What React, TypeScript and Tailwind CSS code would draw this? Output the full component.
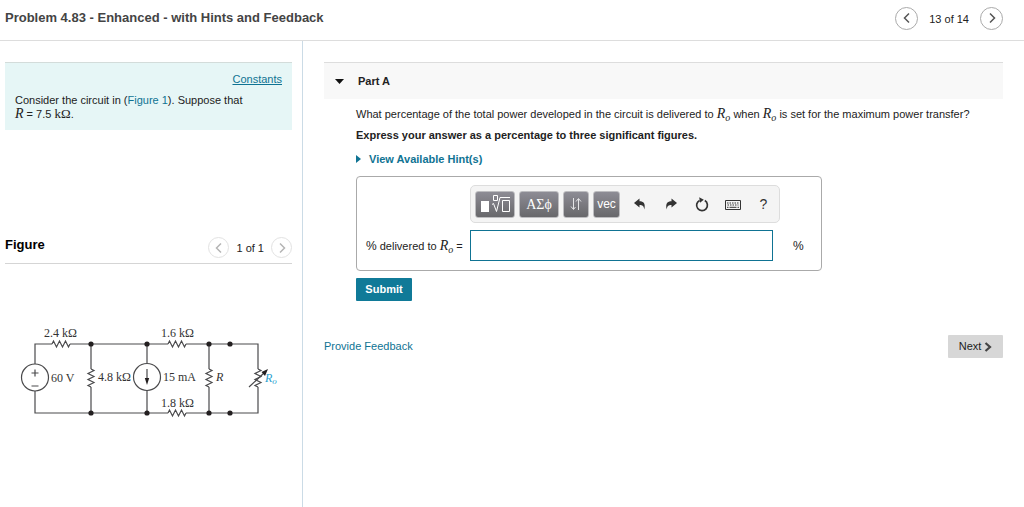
import { useState } from "react";
import type { ReactNode } from "react";

const LINK = "text-[#0f7393] hover:underline";

const TOOL_BUTTON =
  "flex h-[27px] shrink-0 items-center justify-center rounded-[3px] border border-[#bdbdc0] bg-linear-to-b from-[#8d8c95] to-[#68686b] text-white";

const ICON_BUTTON = "flex h-[27px] w-[31px] items-center justify-center text-[#333]";

function MathVar({ name, sub }: { name: string; sub?: string }) {
  return (
    <span className="font-['Liberation_Serif',serif] text-[14px] leading-none italic">
      {name}
      {sub && <sub className="bottom-[-3px] text-[10px]">{sub}</sub>}
    </span>
  );
}

function Chevron({ flip }: { flip?: boolean }) {
  return (
    <svg viewBox="0 0 10 12" className="h-3 w-[10px]" fill="none" stroke="currentColor" strokeWidth="1.5">
      <path d={flip ? "M3 1.5 7.5 6 3 10.5" : "M7 1.5 2.5 6 7 10.5"} />
    </svg>
  );
}

function Pager({ label, disabled }: { label: string; disabled?: boolean }) {
  const size = disabled ? "size-[21px] border-[#e2e2e2] text-[#b5b5b5]" : "size-[23px] border-[#aaa] text-[#555]";
  const button = `flex items-center justify-center rounded-full border ${size}`;
  return (
    <div className={`flex items-center text-[11px] text-[#222] ${disabled ? "gap-[7px]" : "gap-[11px]"}`}>
      <button type="button" aria-label="Previous" disabled={disabled} className={button}>
        <Chevron />
      </button>
      <span className="pt-[2px] whitespace-nowrap">{label}</span>
      <button type="button" aria-label="Next" disabled={disabled} className={button}>
        <Chevron flip />
      </button>
    </div>
  );
}

const NODES = [
  [91, 24], [147, 24], [209, 24], [230, 24],
  [91, 93], [147, 93], [209, 93], [230, 93],
];

// Zigzag resistors: horizontal ones start at x, vertical ones at y
const hResistor = (x: number, y: number) =>
  `M${x} ${y}l1.5-3 3 6 3-6 3 6 3-6 3 6 1.5-3`;
const vResistor = (x: number, y: number) =>
  `M${x} ${y}l3 1.5-6 3 6 3-6 3 6 3-6 3 3 1.5`;

function Circuit() {
  return (
    <svg viewBox="0 0 292 110" className="block h-[110px] w-[292px]" role="img" aria-label="Figure 1 circuit">
      <g fill="none" stroke="#4a4a4c" strokeWidth="1.2">
        <path d="M35 44V24H52M70 24H168M186 24H258V49M258 67V93H186M168 93H35V71" />
        <path d="M91 24V49M91 67V93M147 24V43M147 70V93M209 24V49M209 67V93" />
        <path d={hResistor(52, 24)} />
        <path d={hResistor(168, 24)} />
        <path d={hResistor(168, 93)} />
        <path d={vResistor(91, 49)} />
        <path d={vResistor(209, 49)} />
        <path d={vResistor(258, 49)} />
        <circle cx="35" cy="57.5" r="13.5" />
        <circle cx="147" cy="57" r="13.5" />
        <path d="M31.500 53h7M35 49.500v7M31.500 66h7M147 49V60M249 67 264 53" />
      </g>
      <g fill="#231f20">
        {NODES.map(([x, y]) => (
          <circle key={`${x}-${y}`} cx={x} cy={y} r="2.6" />
        ))}
        <path d="M144.800 58h4.400L147 65zM268 49l-3 7-3.500-4z" />
      </g>
      <g fill="#333" className="font-['Liberation_Serif',serif] text-[12px]">
        <text x="44" y="17">2.4 kΩ</text>
        <text x="161" y="17">1.6 kΩ</text>
        <text x="51" y="62">60 V</text>
        <text x="98" y="61">4.8 kΩ</text>
        <text x="163" y="61">15 mA</text>
        <text x="216" y="61" fontStyle="italic">R</text>
        <text x="161" y="87">1.8 kΩ</text>
        <text x="265" y="62" fontStyle="italic" fill="#2a9fd0">
          R<tspan dy="2" fontSize="9">o</tspan>
        </text>
      </g>
    </svg>
  );
}

function IconButton({ label, children }: { label: string; children: ReactNode }) {
  return (
    <button type="button" aria-label={label} className={ICON_BUTTON}>
      {children}
    </button>
  );
}

function Toolbar() {
  return (
    <div className="flex h-[38px] w-[310px] items-center gap-1 rounded-[5px] border border-[#ddd] bg-[#f4f4f4] pl-1">
      <button type="button" aria-label="Templates" className={`${TOOL_BUTTON} w-10`}>
        <svg viewBox="0 0 32 20" className="h-5 w-8" fill="none" stroke="white">
          <path d="M2 7h8v11H2z" fill="white" stroke="none" />
          <path d="M14.500 1.500h4v5h-4zM13 10.500l1.500-1 3 8L21 3.500h10M23.500 6.500h7v11h-7z" />
        </svg>
      </button>
      <button
        type="button"
        className={`${TOOL_BUTTON} w-10 font-['Liberation_Serif',serif] text-[14px]`}
      >
        ΑΣϕ
      </button>
      <button type="button" aria-label="Subscripts" className={`${TOOL_BUTTON} w-[26px]`}>
        <svg viewBox="0 0 12 14" className="h-[14px] w-3" fill="none" stroke="#e4e4e6">
          <path d="M3.500 1v11M1 9.500l2.500 3 2-2.500M8.500 13V2M6 4.500l2.500-3 2.500 3" />
        </svg>
      </button>
      <button type="button" className={`${TOOL_BUTTON} w-[27px] text-[12px]`}>
        vec
      </button>
      <div className="flex">
        <IconButton label="Undo">
          <svg viewBox="0 0 12 12" className="size-3" fill="currentColor">
            <path d="M0 5 5.500.5V3.300C9.500 3.300 11.800 5.500 10.300 11.500 10 8 8.500 6.900 5.500 6.900V9.500z" />
          </svg>
        </IconButton>
        <IconButton label="Redo">
          <svg viewBox="0 0 12 12" className="size-3" fill="currentColor">
            <path d="M12 5 6.500.5V3.300C2.500 3.300.2 5.500 1.700 11.500 2 8 3.500 6.900 6.500 6.900V9.500z" />
          </svg>
        </IconButton>
        <IconButton label="Reset">
          <svg viewBox="0 0 14 15" className="h-[15px] w-[14px]">
            <path d="M9.800 3.600A5.400 5.400 0 1 1 4.600 3.400" fill="none" stroke="currentColor" strokeWidth="1.700" />
            <path d="M4.200.300 8.800 2.800 5 5.800z" fill="currentColor" />
          </svg>
        </IconButton>
        <IconButton label="Keyboard shortcuts">
          <svg viewBox="0 0 16 10" className="mt-[2px] h-[10px] w-4" fill="none" stroke="currentColor">
            <path d="M.5.5h15v9H.5z" />
            <path d="M2 3h12M2.500 5h11" strokeDasharray="1.500 1" />
            <path d="M2 7.300h1.500M4.500 7.300h7M12.500 7.300H14" />
          </svg>
        </IconButton>
        <button type="button" aria-label="Help" className={`${ICON_BUTTON} text-[14px]`}>
          ?
        </button>
      </div>
    </div>
  );
}

export default function App() {
  const [answer, setAnswer] = useState("");
  const [open, setOpen] = useState(true);

  return (
    <div className="flex min-h-screen flex-col bg-white font-['Liberation_Sans',Arial,sans-serif] text-[11px] text-[#222]">
      {/* Header */}
      <header className="flex h-[41px] items-center justify-between border-b border-[#ddd] pr-[21px] pb-1 pl-[5px]">
        <h1 className="text-[13px] font-bold text-[#444]">Problem 4.83 - Enhanced - with Hints and Feedback</h1>
        <Pager label="13 of 14" />
      </header>

      <div className="flex grow">
        {/* Problem statement and figure */}
        <aside className="w-[303px] shrink-0 border-r border-[#cbdbe6] pt-[21px] pr-[10px] pl-[5px]">
          <section className="border-t border-[#d3dcda] bg-[#e6f6f6] px-[10px] pt-[10px] pb-[10px]">
            <div className="text-right leading-[13px]">
              <a href="#constants" className="text-[#0f7393] underline">Constants</a>
            </div>
            <p className="mt-2 leading-[13px]">
              Consider the circuit in (<a href="#figure" className={LINK}>Figure 1</a>). Suppose that
            </p>
            <p className="h-[13px] leading-[13px]">
              <MathVar name="R" /> = 7.5 <span className="font-['Liberation_Serif',serif] text-[13px] leading-none">kΩ</span>.
            </p>
          </section>

          <section id="figure" className="mt-[107px]">
            <div className="flex h-[27px] items-start justify-between border-b border-[#d5d5d5]">
              <h2 className="text-[13px] leading-4 font-bold text-black">Figure</h2>
              <Pager label="1 of 1" disabled />
            </div>
            <div className="-ml-[5px] pt-14">
              <Circuit />
            </div>
          </section>
        </aside>

        {/* Part A */}
        <main className="min-w-0 grow pt-[21px] pr-[21px] pl-[21px]">
          <h2 className="border-t border-[#ddd] bg-[#f8f8f8]">
            <button
              type="button"
              aria-expanded={open}
              onClick={() => setOpen(!open)}
              className="flex h-9 w-full items-center gap-[14px] pl-[11px] text-[11px] font-bold"
            >
              <svg viewBox="0 0 9 5" className="h-[5px] w-[9px]">
                <path d="M0 0h9L4.500 5z" fill="#111" />
              </svg>
              Part A
            </button>
          </h2>

          {open && (
            <div className="pt-2 pl-8">
              <p className="h-[14px] leading-[14px]">
                What percentage of the total power developed in the circuit is delivered to{" "}
                <MathVar name="R" sub="o" /> when <MathVar name="R" sub="o" /> is set for the maximum power transfer?
              </p>
              <p className="mt-[7px] leading-[14px] font-bold">
                Express your answer as a percentage to three significant figures.
              </p>
              <button
                type="button"
                className="mt-[10px] flex items-center gap-2 leading-[14px] font-bold text-[#0f7393]"
              >
                <svg viewBox="0 0 5 8" className="h-2 w-[5px]">
                  <path d="M0 0 5 4 0 8z" fill="currentColor" />
                </svg>
                View Available Hint(s)
              </button>

              <form onSubmit={(e) => e.preventDefault()}>
                <div className="mt-[10px] grid w-[466px] grid-cols-[104px_303px_auto] items-center gap-y-[7px] rounded-[4px] border border-[#aaa] pt-2 pb-[9px] pl-[9px]">
                  <div className="col-span-2 col-start-2">
                    <Toolbar />
                  </div>
                  <label htmlFor="answer" className="leading-none">
                    <span className="text-[12px]">%</span> delivered to <MathVar name="R" sub="o" /> =
                  </label>
                  <input
                    id="answer"
                    type="text"
                    value={answer}
                    onChange={(e) => setAnswer(e.target.value)}
                    className="h-[31px] border border-[#0f7393] bg-white px-2 text-[13px] outline-none"
                  />
                  <span className="pl-5 text-[12px]">%</span>
                </div>
                <button
                  type="submit"
                  className="mt-[7px] h-[23px] w-14 rounded-[1px] bg-[#107a98] text-[11px] font-bold text-white"
                >
                  Submit
                </button>
              </form>
            </div>
          )}

          <div className="mt-[34px] flex items-center justify-between">
            <a href="#feedback" className={LINK}>Provide Feedback</a>
            <button
              type="button"
              className="flex h-[23px] w-[55px] items-center justify-center gap-[3px] rounded-[1px] bg-[#d7d7d7]"
            >
              Next
              <svg viewBox="0 0 8 10" className="h-[10px] w-2" fill="none" stroke="#444" strokeWidth="2.200">
                <path d="M1.500 1 6 5 1.500 9" />
              </svg>
            </button>
          </div>
        </main>
      </div>
    </div>
  );
}
